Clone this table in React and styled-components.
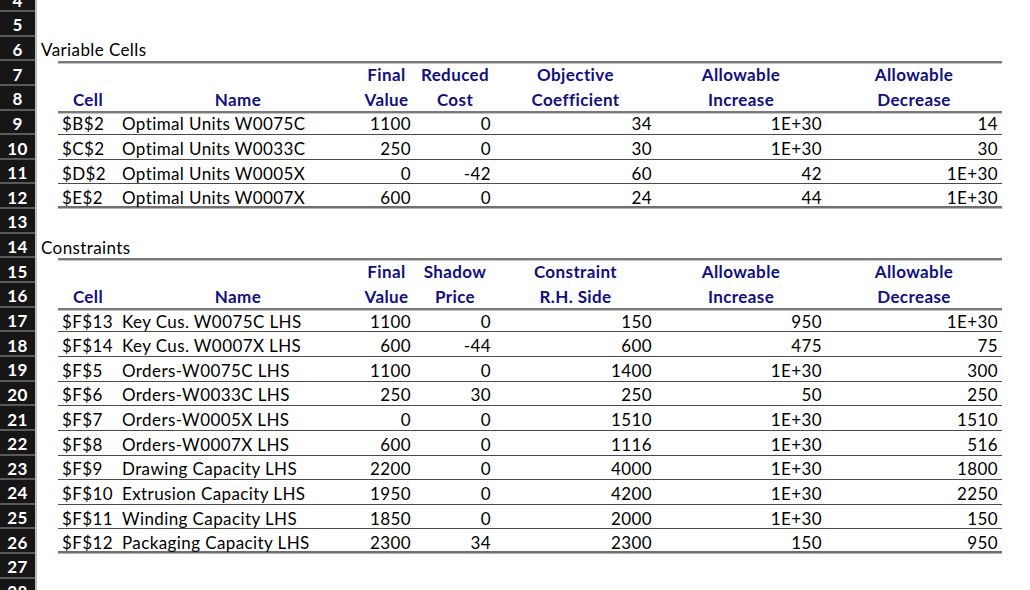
import React from 'react';
import styled, { createGlobalStyle } from 'styled-components';

const GlobalStyle = createGlobalStyle`
  html, body { margin: 0; padding: 0; background: #fff; }
  body { font-family: Lato, "Liberation Sans", sans-serif; }
`;

const ROW_H = 24.65;
const COLS = '35px 3px 20px 60px 240px 57px 80px 161px 170px 176px 1fr';

const Viewport = styled.div`
  width: 1030px;
  height: 590px;
  overflow: hidden;
  background: #fff;
`;

const Sheet = styled.div`
  margin-top: -12.65px;
  display: flex;
  flex-direction: column;
`;

const Row = styled.div`
  display: grid;
  grid-template-columns: ${COLS};
  height: ${ROW_H}px;
`;

const RowHead = styled.div`
  background: #161616;
  color: #fff;
  font-weight: 700;
  font-size: 17px;
  letter-spacing: 0.3px;
  display: flex;
  align-items: center;
  justify-content: center;
  padding-top: 1px;
  box-shadow: inset 0 -2px 0 #5a5a5a;
`;

const Gutter = styled.div`
  background: linear-gradient(to right, #bdbdbd 0 2px, #fff 2px);
`;

const shadowFor = ({ $top, $bottom }) => {
  const s = [];
  if ($top) s.push('inset 0 2px 0 #7a7a7a', 'inset 0 3px 0 #c4c4c4');
  if ($bottom === 'thin') s.push('inset 0 -1px 0 #4a4a4a');
  if ($bottom === 'thick') s.push('inset 0 -1px 0 #b4b4b4', 'inset 0 -3px 0 #707070');
  return s.length ? s.join(', ') : 'none';
};

const Cell = styled.div`
  display: flex;
  align-items: center;
  justify-content: ${({ $align }) =>
    $align === 'right' ? 'flex-end' : $align === 'center' ? 'center' : 'flex-start'};
  padding: 2px 4px 0;
  font-size: 17px;
  letter-spacing: 0.4px;
  white-space: nowrap;
  color: ${({ $head }) => ($head ? '#10107f' : '#000')};
  font-weight: ${({ $head }) => ($head ? 700 : 400)};
  box-shadow: ${shadowFor};
`;

const Title = styled.div`
  grid-column: 3 / -1;
  display: flex;
  align-items: center;
  padding: 2px 0 0 3px;
  font-size: 17px;
  letter-spacing: 0.4px;
  color: #000;
`;

const Blank = styled.div``;

const varHeads = [
  ['', '', 'Final', 'Reduced', 'Objective', 'Allowable', 'Allowable'],
  ['Cell', 'Name', 'Value', 'Cost', 'Coefficient', 'Increase', 'Decrease'],
];

const conHeads = [
  ['', '', 'Final', 'Shadow', 'Constraint', 'Allowable', 'Allowable'],
  ['Cell', 'Name', 'Value', 'Price', 'R.H. Side', 'Increase', 'Decrease'],
];

const varData = [
  ['$B$2', 'Optimal Units W0075C', '1100', '0', '34', '1E+30', '14'],
  ['$C$2', 'Optimal Units W0033C', '250', '0', '30', '1E+30', '30'],
  ['$D$2', 'Optimal Units W0005X', '0', '-42', '60', '42', '1E+30'],
  ['$E$2', 'Optimal Units W0007X', '600', '0', '24', '44', '1E+30'],
];

const conData = [
  ['$F$13', 'Key Cus. W0075C LHS', '1100', '0', '150', '950', '1E+30'],
  ['$F$14', 'Key Cus. W0007X LHS', '600', '-44', '600', '475', '75'],
  ['$F$5', 'Orders-W0075C LHS', '1100', '0', '1400', '1E+30', '300'],
  ['$F$6', 'Orders-W0033C LHS', '250', '30', '250', '50', '250'],
  ['$F$7', 'Orders-W0005X LHS', '0', '0', '1510', '1E+30', '1510'],
  ['$F$8', 'Orders-W0007X LHS', '600', '0', '1116', '1E+30', '516'],
  ['$F$9', 'Drawing Capacity LHS', '2200', '0', '4000', '1E+30', '1800'],
  ['$F$10', 'Extrusion Capacity LHS', '1950', '0', '4200', '1E+30', '2250'],
  ['$F$11', 'Winding Capacity LHS', '1850', '0', '2000', '1E+30', '150'],
  ['$F$12', 'Packaging Capacity LHS', '2300', '34', '2300', '150', '950'],
];

const Frame = ({ n, children }) => (
  <Row>
    <RowHead>{n}</RowHead>
    <Gutter />
    {children}
  </Row>
);

const EmptyRow = ({ n }) => <Frame n={n} />;

const TitleRow = ({ n, text }) => (
  <Frame n={n}>
    <Title>{text}</Title>
  </Frame>
);

const HeadRow = ({ n, cells, top }) => (
  <Frame n={n}>
    <Blank />
    {cells.map((c, i) => (
      <Cell key={i} $head $align="center" $top={top}>
        {c}
      </Cell>
    ))}
  </Frame>
);

const DataRow = ({ n, cells, top, bottom }) => (
  <Frame n={n}>
    <Blank />
    {cells.map((c, i) => (
      <Cell key={i} $align={i < 2 ? 'left' : 'right'} $top={top} $bottom={bottom}>
        {c}
      </Cell>
    ))}
  </Frame>
);

const Section = ({ start, title, heads, data }) => (
  <>
    <TitleRow n={start} text={title} />
    <HeadRow n={start + 1} cells={heads[0]} top />
    <HeadRow n={start + 2} cells={heads[1]} />
    {data.map((r, i) => (
      <DataRow
        key={i}
        n={start + 3 + i}
        cells={r}
        top={i === 0}
        bottom={i === data.length - 1 ? 'thick' : 'thin'}
      />
    ))}
  </>
);

export default function App() {
  return (
    <>
      <GlobalStyle />
      <Viewport>
        <Sheet>
          <EmptyRow n={4} />
          <EmptyRow n={5} />
          <Section start={6} title="Variable Cells" heads={varHeads} data={varData} />
          <EmptyRow n={13} />
          <Section start={14} title="Constraints" heads={conHeads} data={conData} />
          <EmptyRow n={27} />
          <EmptyRow n={28} />
        </Sheet>
      </Viewport>
    </>
  );
}
